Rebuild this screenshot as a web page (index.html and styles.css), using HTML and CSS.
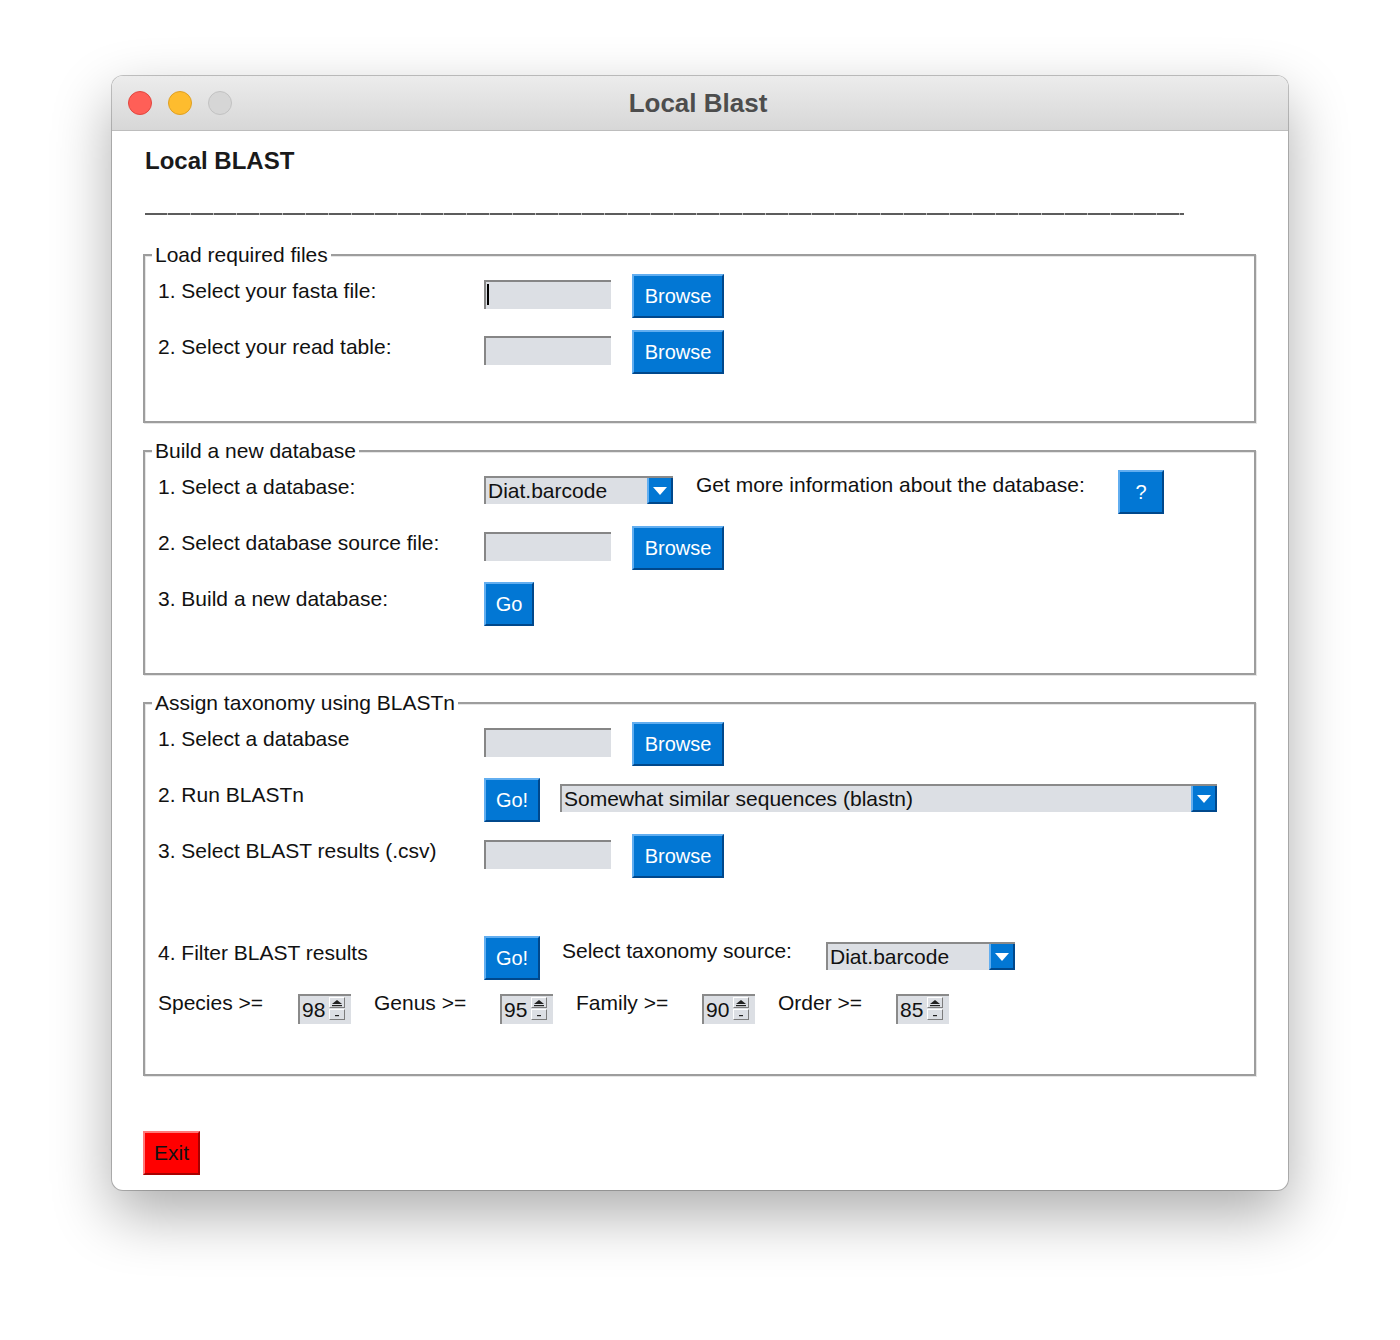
FILE: index.html
```html
<!DOCTYPE html>
<html>
<head>
<meta charset="utf-8">
<title>Local Blast</title>
<link rel="stylesheet" href="styles.css">
</head>
<body>
<div class="page">
  <div class="window">
    <div class="titlebar">
      <div class="lights">
        <span class="light red"></span>
        <span class="light yellow"></span>
        <span class="light gray"></span>
      </div>
      <div class="title">Local Blast</div>
      <div></div>
    </div>
    <div class="content">
      <h1 class="heading">Local BLAST</h1>
      <div class="rule"></div>

      <fieldset class="group">
        <legend>Load required files</legend>
        <div class="rows">
          <div class="row">
            <span class="label">1. Select your fasta file:</span>
            <span class="entry"><span class="caret"></span></span>
            <button class="btn browse">Browse</button>
          </div>
          <div class="row">
            <span class="label">2. Select your read table:</span>
            <span class="entry"></span>
            <button class="btn browse">Browse</button>
          </div>
        </div>
      </fieldset>

      <fieldset class="group">
        <legend>Build a new database</legend>
        <div class="rows">
          <div class="row">
            <span class="label">1. Select a database:</span>
            <span class="combo combo-small"><span class="combo-text">Diat.barcode</span><span class="combo-arrow"><svg width="14" height="9" viewBox="0 0 14 9"><path d="M0 0H14L7 8Z" fill="#fff"/></svg></span></span>
            <span class="info-text">Get more information about the database:</span>
            <button class="btn help">?</button>
          </div>
          <div class="row">
            <span class="label">2. Select database source file:</span>
            <span class="entry"></span>
            <button class="btn browse">Browse</button>
          </div>
          <div class="row">
            <span class="label">3. Build a new database:</span>
            <button class="btn go">Go</button>
          </div>
        </div>
      </fieldset>

      <fieldset class="group last">
        <legend>Assign taxonomy using BLASTn</legend>
        <div class="rows">
          <div class="row">
            <span class="label">1. Select a database</span>
            <span class="entry"></span>
            <button class="btn browse">Browse</button>
          </div>
          <div class="row">
            <span class="label">2. Run BLASTn</span>
            <button class="btn go-bang">Go!</button>
            <span class="combo combo-wide"><span class="combo-text">Somewhat similar sequences (blastn)</span><span class="combo-arrow"><svg width="14" height="9" viewBox="0 0 14 9"><path d="M0 0H14L7 8Z" fill="#fff"/></svg></span></span>
          </div>
          <div class="row">
            <span class="label">3. Select BLAST results (.csv)</span>
            <span class="entry"></span>
            <button class="btn browse">Browse</button>
          </div>
          <div class="row row-filter">
            <span class="label">4. Filter BLAST results</span>
            <button class="btn go-bang">Go!</button>
            <span class="tax-text">Select taxonomy source:</span>
            <span class="combo combo-tax"><span class="combo-text">Diat.barcode</span><span class="combo-arrow"><svg width="14" height="9" viewBox="0 0 14 9"><path d="M0 0H14L7 8Z" fill="#fff"/></svg></span></span>
          </div>
          <div class="row row-spin">
            <span class="spin-label w-species">Species &gt;=</span>
            <span class="spin"><span class="spin-val">98</span><span class="spin-btns"><span class="sb up"><svg width="12" height="8" viewBox="0 0 12 8"><path d="M1 5L6 1L11 5Z" fill="#222"/><rect x="1" y="6" width="10" height="1.2" fill="#222"/></svg></span><span class="sb down"><svg width="12" height="8" viewBox="0 0 12 8"><rect x="4" y="4" width="4" height="1.2" fill="#222"/></svg></span></span></span>
            <span class="spin-label w-genus">Genus &gt;=</span>
            <span class="spin"><span class="spin-val">95</span><span class="spin-btns"><span class="sb up"><svg width="12" height="8" viewBox="0 0 12 8"><path d="M1 5L6 1L11 5Z" fill="#222"/><rect x="1" y="6" width="10" height="1.2" fill="#222"/></svg></span><span class="sb down"><svg width="12" height="8" viewBox="0 0 12 8"><rect x="4" y="4" width="4" height="1.2" fill="#222"/></svg></span></span></span>
            <span class="spin-label w-family">Family &gt;=</span>
            <span class="spin"><span class="spin-val">90</span><span class="spin-btns"><span class="sb up"><svg width="12" height="8" viewBox="0 0 12 8"><path d="M1 5L6 1L11 5Z" fill="#222"/><rect x="1" y="6" width="10" height="1.2" fill="#222"/></svg></span><span class="sb down"><svg width="12" height="8" viewBox="0 0 12 8"><rect x="4" y="4" width="4" height="1.2" fill="#222"/></svg></span></span></span>
            <span class="spin-label w-order">Order &gt;=</span>
            <span class="spin"><span class="spin-val">85</span><span class="spin-btns"><span class="sb up"><svg width="12" height="8" viewBox="0 0 12 8"><path d="M1 5L6 1L11 5Z" fill="#222"/><rect x="1" y="6" width="10" height="1.2" fill="#222"/></svg></span><span class="sb down"><svg width="12" height="8" viewBox="0 0 12 8"><rect x="4" y="4" width="4" height="1.2" fill="#222"/></svg></span></span></span>
          </div>
        </div>
      </fieldset>

      <button class="btn exit">Exit</button>
    </div>
  </div>
</div>
</body>
</html>
```

FILE: styles.css
```css
* { box-sizing: border-box; }

body {
  margin: 0;
  background: #ffffff;
  font-family: "Liberation Sans", Arial, sans-serif;
  color: #111;
}

.page {
  padding: 76px 112px 149px 112px;
}

.window {
  width: 1176px;
  background: #ffffff;
  border-radius: 11px;
  overflow: hidden;
  box-shadow: 0 0 0 1px rgba(0, 0, 0, 0.22), 0 24px 60px rgba(0, 0, 0, 0.33);
}

.titlebar {
  height: 55px;
  padding: 0 16px;
  background: linear-gradient(#ececec, #d7d7d7);
  border-bottom: 1px solid #bdbdbd;
  display: grid;
  grid-template-columns: 1fr auto 1fr;
  align-items: center;
}

.lights {
  display: flex;
  gap: 16px;
}

.light {
  width: 24px;
  height: 24px;
  border-radius: 50%;
  border: 1px solid;
}
.light.red { background: #ff5f57; border-color: #e2463f; }
.light.yellow { background: #febc2e; border-color: #dfa023; }
.light.gray { background: #d6d6d6; border-color: #c2c2c2; }

.title {
  font-size: 26px;
  font-weight: bold;
  color: #4d4d4d;
  margin-right: 4px;
}

.content {
  padding: 16px 31px 15px 31px;
}

.heading {
  margin: 0 0 0 2px;
  font-size: 24px;
  line-height: 28px;
  font-weight: bold;
  color: #1a1a1a;
}

.rule {
  margin: 38px 0 0 2px;
  width: 1039px;
  height: 2px;
  background: repeating-linear-gradient(90deg, #5c5c5c 0 22px, #bdbdbd 22px 23px);
}

.group {
  width: 1113px;
  margin: 17px 0 0 0;
  padding: 8px 0 47px 0;
  border: 2px solid #9d9d9d;
  box-shadow: inset 1px 1px 0 #e6e6e6, 1px 1px 0 #e6e6e6;
  min-width: 0;
}
.group:first-of-type { margin-top: 29px; }
.group.last { padding-bottom: 50px; }

.group legend {
  margin-left: 7px;
  padding: 0 3px;
  font-size: 21px;
  line-height: 22px;
  background: #fff;
  color: #111;
}

.rows {
  padding-left: 13px;
  display: flex;
  flex-direction: column;
  gap: 12px;
}

.row {
  display: flex;
  align-items: flex-start;
  height: 44px;
}

.label {
  width: 326px;
  margin-top: 6px;
  font-size: 21px;
  line-height: 22px;
  white-space: nowrap;
}

.entry {
  width: 127px;
  height: 29px;
  margin-top: 6px;
  background: #dcdfe4;
  border-top: 2px solid #868686;
  border-left: 2px solid #868686;
  display: flex;
}

.caret {
  width: 2px;
  height: 21px;
  margin: 2px 0 0 1px;
  background: #000;
}

.btn {
  font-family: "Liberation Sans", Arial, sans-serif;
  font-size: 20px;
  height: 44px;
  padding: 0;
  color: #ffffff;
  background: #0277d4;
  border-style: solid;
  border-width: 2px;
  border-color: #62aef0 #00488c #00488c #62aef0;
  display: flex;
  align-items: center;
  justify-content: center;
}

.browse { width: 92px; margin-left: 21px; }
.go { width: 50px; }
.go-bang { width: 56px; }
.help { width: 46px; }

.combo {
  height: 28px;
  margin-top: 6px;
  background: #dcdfe4;
  border-top: 2px solid #8a8a8a;
  border-left: 2px solid #8a8a8a;
  display: flex;
}

.combo-text {
  flex: 1;
  padding-left: 2px;
  font-size: 21px;
  line-height: 25px;
  white-space: nowrap;
  overflow: hidden;
}

.combo-arrow {
  width: 26px;
  height: 26px;
  background: #0277d4;
  border-style: solid;
  border-width: 0 2px 2px 2px;
  border-color: #62aef0 #00488c #00488c #62aef0;
  display: flex;
  align-items: center;
  justify-content: center;
  padding-top: 2px;
}

.combo-small { width: 189px; }
.combo-wide { width: 657px; margin-left: 20px; }
.combo-tax { width: 189px; }

.info-text {
  width: 422px;
  margin-left: 23px;
  margin-top: 4px;
  font-size: 21px;
  line-height: 22px;
  white-space: nowrap;
}

.row-filter { margin-top: 46px; }

.tax-text {
  width: 264px;
  margin-left: 22px;
  margin-top: 4px;
  font-size: 21px;
  line-height: 22px;
  white-space: nowrap;
}

.row-spin {
  margin-top: -6px;
  height: 38px;
}

.spin-label {
  margin-top: 6px;
  font-size: 21px;
  line-height: 22px;
  white-space: nowrap;
}
.w-species { width: 140px; }
.w-genus { width: 126px; margin-left: 23px; }
.w-family { width: 126px; margin-left: 23px; }
.w-order { width: 118px; margin-left: 23px; }

.spin {
  width: 53px;
  height: 30px;
  margin-top: 8px;
  background: #dcdfe4;
  border-top: 2px solid #8a8a8a;
  border-left: 2px solid #8a8a8a;
  display: flex;
}

.spin-val {
  width: 29px;
  padding-left: 2px;
  font-size: 21px;
  line-height: 28px;
}

.spin-btns {
  width: 16px;
  display: flex;
  flex-direction: column;
  gap: 1px;
  padding-top: 1px;
}

.sb {
  height: 11px;
  border-style: solid;
  border-width: 1px;
  border-color: #ffffff #7c7c7c #7c7c7c #ffffff;
  display: flex;
  align-items: center;
  justify-content: center;
}

.exit {
  width: 57px;
  margin-top: 55px;
  font-size: 21px;
  color: #111;
  background: #ff0000;
  border-color: #ff7a7a #a80000 #a80000 #ff7a7a;
}
```
